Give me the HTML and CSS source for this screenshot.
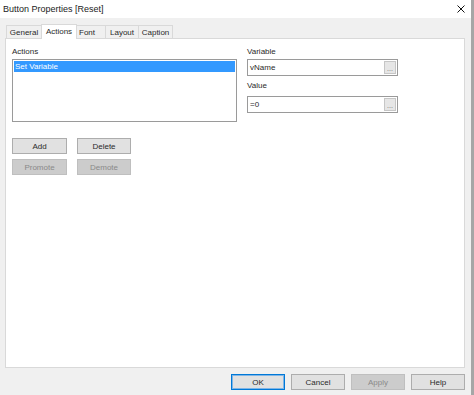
FILE: index.html
```html
<!DOCTYPE html>
<html lang="en">
<head>
  <meta charset="UTF-8">
  <title>Button Properties [Reset]</title>
  <link rel="stylesheet" href="styles.css">
</head>
<body>
  <div class="window">
    <div class="titlebar">
      <span class="title">Button Properties [Reset]</span>
      <svg class="close" width="8" height="8" viewBox="0 0 8 8">
        <path d="M0.5 0.5 L7.5 7.5 M7.5 0.5 L0.5 7.5" stroke="#111" stroke-width="1" fill="none"/>
      </svg>
    </div>
    <div class="dialog">
      <div class="tabs">
        <div class="tab tab-general">General</div>
        <div class="tab tab-actions active">Actions</div>
        <div class="tab tab-font">Font</div>
        <div class="tab tab-layout">Layout</div>
        <div class="tab tab-caption">Caption</div>
      </div>
      <div class="panel">
        <div class="col-left">
          <div class="label">Actions</div>
          <div class="listbox">
            <div class="list-item selected">Set Variable</div>
          </div>
          <div class="btn-row first">
            <button class="btn btn-add">Add</button>
            <button class="btn btn-delete">Delete</button>
          </div>
          <div class="btn-row">
            <button class="btn btn-add" disabled>Promote</button>
            <button class="btn btn-delete" disabled>Demote</button>
          </div>
        </div>
        <div class="col-right">
          <div class="label">Variable</div>
          <div class="textbox">
            <span class="text">vName</span>
            <span class="dots">...</span>
          </div>
          <div class="label label-value">Value</div>
          <div class="textbox">
            <span class="text">=0</span>
            <span class="dots">...</span>
          </div>
        </div>
      </div>
      <div class="footer">
        <button class="btn btn-foot default">OK</button>
        <button class="btn btn-foot">Cancel</button>
        <button class="btn btn-foot" disabled>Apply</button>
        <button class="btn btn-foot">Help</button>
      </div>
    </div>
  </div>
</body>
</html>
```

FILE: styles.css
```css
body {
  margin: 0;
  padding: 0;
  font-family: 'Liberation Sans', Arial, sans-serif;
  font-size: 8px;
  color: #2a2a2a;
  background: #f0f0f0;
}
.window {
  width: 471px;
  height: 395px;
  border-right: 3px solid #a6a6a6;
  display: flex;
  flex-direction: column;
  overflow: hidden;
}
.titlebar {
  height: 18px;
  background: #fff;
  display: flex;
  align-items: center;
  justify-content: space-between;
  padding: 0 6px 0 3px;
}
.title {
  font-size: 9px;
  color: #222;
}
.close {
  display: block;
}
.dialog {
  flex: 1;
  background: #f0f0f0;
  padding: 6px 6px 0 5px;
  display: flex;
  flex-direction: column;
}
.tabs {
  display: flex;
  align-items: flex-end;
  height: 15px;
  margin-bottom: -1px;
  padding-left: 2px;
}
.tab {
  height: 14px;
  line-height: 13px;
  background: #f0f0f0;
  border: 1px solid #d9d9d9;
  border-bottom: none;
  margin-left: -1px;
  box-sizing: border-box;
  text-align: center;
}
.tab-general { width: 36px; }
.tab-actions { width: 36px; }
.tab-font { width: 31px; text-align: left; padding-left: 3px; }
.tab-layout { width: 34px; }
.tab-caption { width: 35px; }
.tab.active {
  height: 15px;
  line-height: 14px;
  background: #fff;
  position: relative;
  z-index: 1;
  margin-right: -1px;
}
.panel {
  height: 330px;
  box-sizing: border-box;
  background: #fff;
  border: 1px solid #d9d9d9;
  padding: 7px 0 0 6px;
  display: flex;
}
.col-left {
  width: 225px;
}
.col-right {
  margin-left: 10px;
  width: 151px;
}
.label {
  height: 12px;
  line-height: 12px;
}
.label-value {
  margin-top: 4px;
}
.listbox {
  margin-top: 1px;
  height: 63px;
  box-sizing: border-box;
  border: 1px solid #9a9a9a;
  padding: 1px;
}
.list-item {
  height: 11px;
  line-height: 11px;
  padding-left: 1px;
}
.list-item.selected {
  background: #3399ff;
  color: #fff;
}
.btn-row {
  display: flex;
  gap: 10px;
  margin-top: 5px;
}
.btn-row.first {
  margin-top: 16px;
}
.btn {
  font-family: 'Liberation Sans', Arial, sans-serif;
  font-size: 8px;
  color: #2a2a2a;
  background: #e1e1e1;
  border: 1px solid #adadad;
  padding: 0;
  height: 16px;
  box-sizing: border-box;
}
.btn:disabled {
  background: #cccccc;
  border-color: #bfbfbf;
  color: #8a8a8a;
}
.btn-add { width: 55px; }
.btn-delete { width: 54px; }
.textbox {
  margin-top: 1px;
  height: 17px;
  box-sizing: border-box;
  border: 1px solid #9a9a9a;
  background: #fff;
  display: flex;
  align-items: center;
  justify-content: space-between;
  padding: 0 1px 0 2px;
}
.label-value + .textbox {
  margin-top: 4px;
}
.dots {
  width: 12px;
  height: 13px;
  box-sizing: border-box;
  background: #e6e6e6;
  border: 1px solid #c6c6c6;
  color: #6a6a6a;
  font-size: 7px;
  line-height: 13px;
  text-align: center;
}
.footer {
  display: flex;
  justify-content: flex-end;
  gap: 6px;
  padding-top: 6px;
}
.btn-foot {
  width: 54px;
}
.btn.default {
  border-color: #0078d7;
  box-shadow: inset 0 0 0 1px #7fb5e6;
}
```
